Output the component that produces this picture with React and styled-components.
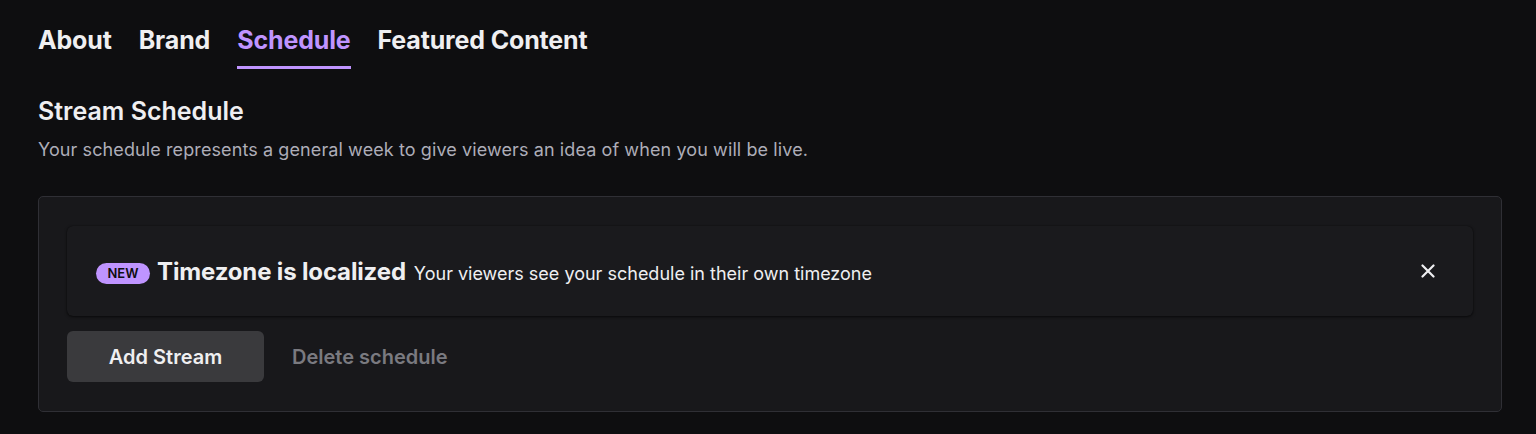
import React from 'react';
import styled, { createGlobalStyle } from 'styled-components';

const GlobalStyle = createGlobalStyle`
  body {
    margin: 0;
    background: #0e0e10;
    font-family: Inter, "Noto Sans", sans-serif;
    color: #efeff1;
  }
`;

const tabs = ['About', 'Brand', 'Schedule', 'Featured Content'];

const App = () => {
    return (
        <>
            <GlobalStyle />
            <Page>
                <TabBar>
                    {tabs.map(tab => (
                        <Tab key={tab} $active={tab === 'Schedule'}>{tab}</Tab>
                    ))}
                </TabBar>
                <Title>Stream Schedule</Title>
                <Description>
                    Your schedule represents a general week to give viewers an idea of when you will be live.
                </Description>
                <Card>
                    <Banner>
                        <BannerText>
                            <Badge>NEW</Badge>
                            <BannerTitle>Timezone is localized</BannerTitle>
                            <BannerBody>Your viewers see your schedule in their own timezone</BannerBody>
                        </BannerText>
                        <CloseButton aria-label="Close">
                            <svg width="14" height="14" viewBox="0 0 14 14">
                                <path d="M1.5 1.5 L12.5 12.5 M12.5 1.5 L1.5 12.5" stroke="#efeff1" strokeWidth="2.2" strokeLinecap="round" />
                            </svg>
                        </CloseButton>
                    </Banner>
                    <Actions>
                        <PrimaryButton>Add Stream</PrimaryButton>
                        <TextButton>Delete schedule</TextButton>
                    </Actions>
                </Card>
            </Page>
        </>
    );
};

export default App;


const Page = styled.div`
  padding: 22px 34px 0 38px;
`;

const TabBar = styled.div`
  display: flex;
  gap: 27px;
`;

const Tab = styled.div`
  font-size: 25px;
  font-weight: 700;
  letter-spacing: -0.15px;
  line-height: 36px;
  padding-bottom: 8px;
  color: ${p => (p.$active ? '#bf94ff' : '#efeff1')};
  border-bottom: 3px solid ${p => (p.$active ? '#bf94ff' : 'transparent')};
`;

const Title = styled.h2`
  margin: 26px 0 0;
  font-size: 25px;
  font-weight: 600;
  line-height: 32px;
`;

const Description = styled.p`
  margin: 11px 0 0;
  font-size: 18px;
  line-height: 24px;
  letter-spacing: 0.1px;
  color: #adadb8;
`;

const Card = styled.div`
  margin-top: 34px;
  background: #18181b;
  border: 1px solid #2f2f35;
  border-radius: 5px;
  padding: 29px 28px 29px;
`;

const Banner = styled.div`
  display: flex;
  align-items: center;
  justify-content: space-between;
  height: 90px;
  padding: 0 38px 0 29px;
  background: #1a1a1d;
  border-radius: 6px;
  box-shadow: 0 1px 3px rgba(0, 0, 0, 0.6), 0 0 1px rgba(0, 0, 0, 0.5);
`;

const BannerText = styled.div`
  display: flex;
  align-items: baseline;
`;

const Badge = styled.span`
  align-self: center;
  margin-top: 4px;
  background: #bf94ff;
  color: #0e0e10;
  font-size: 13px;
  font-weight: 600;
  line-height: 21px;
  padding: 0 11.5px;
  border-radius: 11px;
`;

const BannerTitle = styled.span`
  margin-left: 7px;
  font-size: 24px;
  font-weight: 700;
  letter-spacing: -0.15px;
`;

const BannerBody = styled.span`
  margin-left: 8px;
  font-size: 18px;
  color: #efeff1;
`;

const CloseButton = styled.button`
  display: flex;
  align-items: center;
  justify-content: center;
  background: none;
  border: none;
  padding: 0;
  cursor: pointer;
`;

const Actions = styled.div`
  display: flex;
  align-items: center;
  gap: 28px;
  margin-top: 15px;
`;

const PrimaryButton = styled.button`
  width: 197px;
  height: 51px;
  border: none;
  border-radius: 6px;
  background: #3a3a3d;
  color: #efeff1;
  font-family: inherit;
  font-size: 20px;
  font-weight: 600;
  cursor: pointer;
`;

const TextButton = styled.button`
  background: none;
  border: none;
  padding: 0;
  color: #7a7a80;
  font-family: inherit;
  font-size: 20px;
  font-weight: 600;
  cursor: pointer;
`;
